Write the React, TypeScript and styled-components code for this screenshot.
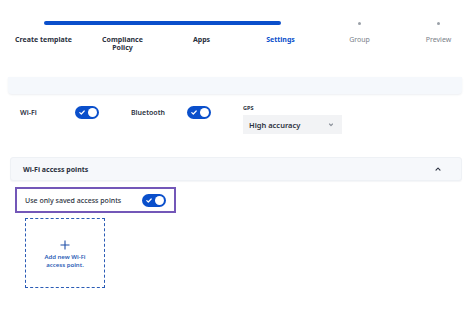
import React from "react";
import styled, { createGlobalStyle } from "styled-components";

const Global = createGlobalStyle`
  html, body { margin: 0; padding: 0; background: #ffffff; }
  body { font-family: "Noto Sans", "Open Sans", Arial, sans-serif; color: #2b3140; }
  * { box-sizing: border-box; }
`;

const Page = styled.div`
  width: 474px;
  height: 317px;
  overflow: hidden;
  background: #fff;
  padding-top: 20px;
`;

const Stepper = styled.div`
  display: grid;
  grid-template-columns: repeat(6, 79px);
  padding-left: 4px;
`;

const StepCol = styled.div`
  display: flex;
  flex-direction: column;
  align-items: center;
`;

const Rail = styled.div`
  display: flex;
  align-items: center;
  width: 100%;
  height: 6px;
`;

const Half = styled.div<{ $on: boolean; $cap: "l" | "r" | "none" }>`
  flex: 1;
  height: 3.5px;
  background: ${(p) => (p.$on ? "#0a4fcb" : "transparent")};
  border-radius: ${(p) => (p.$cap === "l" ? "2px 0 0 2px" : p.$cap === "r" ? "0 2px 2px 0" : "0")};
`;

const Dot = styled.div<{ $show: boolean }>`
  width: ${(p) => (p.$show ? "3px" : "0")};
  height: 3px;
  border-radius: 50%;
  background: #9aa0a8;
`;

const StepLabel = styled.div<{ $state: "done" | "active" | "todo" }>`
  margin-top: 10px;
  font-size: 7px;
  line-height: 8px;
  text-align: center;
  font-weight: ${(p) => (p.$state === "todo" ? 400 : 700)};
  color: ${(p) =>
    p.$state === "active" ? "#0a4fcb" : p.$state === "todo" ? "#7a8089" : "#2b3140"};
`;

const TopPanel = styled.div`
  margin: 25px 12px 0 8px;
  height: 17px;
  background: #f5f8fc;
  border-radius: 0 0 4px 4px;
  box-shadow: 0 1px 2px rgba(30, 50, 90, 0.08);
`;

const SettingsRow = styled.div`
  display: grid;
  grid-template-columns: 111px 112px 120px;
  padding: 12px 0 0 20px;
  height: 63px;
`;

const InlineField = styled.div`
  display: flex;
  align-items: center;
  height: 13px;
`;

const FieldLabel = styled.span<{ $w: number }>`
  width: ${(p) => p.$w}px;
  font-size: 7px;
  font-weight: 600;
  color: #2b3140;
`;

const StackField = styled.div`
  display: flex;
  flex-direction: column;
`;

const SmallLabel = styled.span`
  font-size: 5.5px;
  font-weight: 700;
  color: #2b3140;
  margin-top: -2px;
  height: 11px;
`;

const Select = styled.div`
  width: 99px;
  height: 19px;
  background: #f2f3f5;
  display: flex;
  align-items: center;
  justify-content: space-between;
  padding: 0 8px 0 6px;
  font-size: 7.5px;
  font-weight: 600;
  color: #2b3140;
`;

const ToggleTrack = styled.div`
  width: 24px;
  height: 13px;
  border-radius: 7px;
  background: #0a4fcb;
  display: flex;
  align-items: center;
  justify-content: space-between;
  padding: 0 2px 0 4px;
`;

const Knob = styled.div`
  width: 9px;
  height: 9px;
  border-radius: 50%;
  background: #fff;
`;

const SectionHeader = styled.div`
  margin: 0 12px 0 10px;
  height: 24px;
  background: #f6f8fb;
  border: 1px solid #eef1f5;
  border-radius: 3px;
  display: flex;
  align-items: center;
  justify-content: space-between;
  padding: 0 20px 0 12px;
  font-size: 7px;
  font-weight: 700;
  color: #2b3140;
  box-shadow: 0 1px 1px rgba(30, 50, 90, 0.05);
`;

const Highlight = styled.div`
  margin: 6px 0 0 15px;
  width: 161px;
  height: 26px;
  border: 2px solid #7357b8;
  display: flex;
  align-items: center;
  padding-left: 8px;
  gap: 21px;
  font-size: 7px;
  font-weight: 500;
  color: #2b3140;
`;

const AddCard = styled.div`
  margin: 5px 0 0 25px;
  width: 80px;
  height: 70px;
  border: 1.5px dashed #2a5bb5;
  display: flex;
  flex-direction: column;
  align-items: center;
  justify-content: center;
  padding-top: 2px;
  color: #2a5bb5;
`;

const AddText = styled.div`
  font-size: 6px;
  line-height: 8px;
  font-weight: 600;
  text-align: center;
  margin-top: 3px;
`;

const Check = () => (
  <svg width="6" height="5" viewBox="0 0 6 5">
    <path d="M0.8 2.6 L2.3 4 L5.2 1" fill="none" stroke="#fff" strokeWidth="1.2" strokeLinecap="round" strokeLinejoin="round" />
  </svg>
);

const PlusIcon = () => (
  <svg width="10" height="10" viewBox="0 0 10 10">
    <path d="M5 0.5 V9.5 M0.5 5 H9.5" stroke="#1f4fa8" strokeWidth="1.1" />
  </svg>
);

const Toggle = () => (
  <ToggleTrack>
    <Check />
    <Knob />
  </ToggleTrack>
);

const Chevron = ({ up, color }: { up?: boolean; color: string }) => (
  <svg width="6" height="4" viewBox="0 0 6 4">
    <path
      d={up ? "M1 3.2 L3 1 L5 3.2" : "M1.5 1 L3 2.6 L4.5 1"}
      fill="none"
      stroke={color}
      strokeWidth="1.1"
      strokeLinecap="round"
      strokeLinejoin="round"
    />
  </svg>
);

type Step = { label: React.ReactNode; state: "done" | "active" | "todo"; l: boolean; r: boolean };

const steps: Step[] = [
  { label: "Create template", state: "done", l: false, r: true },
  { label: <>Compliance<br />Policy</>, state: "done", l: true, r: true },
  { label: "Apps", state: "done", l: true, r: true },
  { label: "Settings", state: "active", l: true, r: false },
  { label: "Group", state: "todo", l: false, r: false },
  { label: "Preview", state: "todo", l: false, r: false },
];

export default function App() {
  return (
    <>
      <Global />
      <Page>
        <Stepper>
          {steps.map((s, i) => (
            <StepCol key={i}>
              <Rail>
                <Half $on={s.l} $cap={s.l && !s.r ? "r" : "none"} />
                <Dot $show={s.state === "todo"} />
                <Half $on={s.r} $cap={s.r && !s.l ? "l" : "none"} />
              </Rail>
              <StepLabel $state={s.state}>{s.label}</StepLabel>
            </StepCol>
          ))}
        </Stepper>
        <TopPanel />
        <SettingsRow>
          <InlineField>
            <FieldLabel $w={55}>Wi-Fi</FieldLabel>
            <Toggle />
          </InlineField>
          <InlineField>
            <FieldLabel $w={56}>Bluetooth</FieldLabel>
            <Toggle />
          </InlineField>
          <StackField>
            <SmallLabel>GPS</SmallLabel>
            <Select>
              High accuracy
              <Chevron color="#8a9099" />
            </Select>
          </StackField>
        </SettingsRow>
        <SectionHeader>
          Wi-Fi access points
          <Chevron up color="#2b3140" />
        </SectionHeader>
        <Highlight>
          Use only saved access points
          <Toggle />
        </Highlight>
        <AddCard>
          <PlusIcon />
          <AddText>
            Add new Wi-Fi
            <br />
            access point.
          </AddText>
        </AddCard>
      </Page>
    </>
  );
}
